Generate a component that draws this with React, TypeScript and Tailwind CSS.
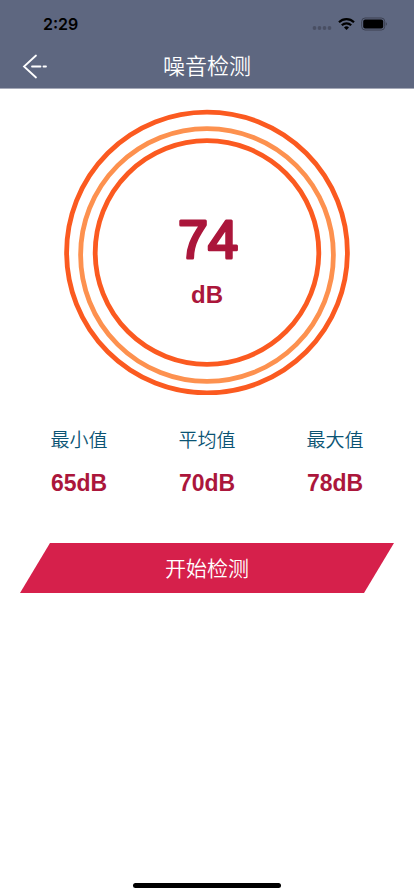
const CJK_FONT = "font-['Noto_Sans_CJK_SC',sans-serif] font-[350]";

const stats = [
  { label: "最小值", value: "65dB" },
  { label: "平均值", value: "70dB" },
  { label: "最大值", value: "78dB" },
];

function StatusBar() {
  return (
    <div className="flex h-11 items-center justify-between pt-1 pr-[27px] pl-[43px] text-black">
      <span className="font-['Inter',sans-serif] text-base font-semibold">
        2:29
      </span>
      <div className="flex items-center gap-1.5">
        <svg width="20" height="14" viewBox="0 0 20 14" fill="#494f63">
          <circle cx="2.5" cy="11" r="1.9" />
          <circle cx="7.5" cy="11" r="1.9" />
          <circle cx="12.5" cy="11" r="1.9" />
          <circle cx="17.5" cy="11" r="1.9" />
        </svg>
        <svg
          width="17"
          height="14"
          viewBox="0 0 17 14"
          fill="none"
          stroke="#000"
          strokeWidth="2.2"
        >
          <path d="M1 5.2a10.8 10.8 0 0 1 15 0" />
          <path d="M3.8 8.2a6.8 6.8 0 0 1 9.4 0" />
          <path
            d="M8.5 13 6 10.4a3.6 3.6 0 0 1 5 0z"
            fill="#000"
            stroke="none"
          />
        </svg>
        <svg width="26" height="14" viewBox="0 0 26 14">
          <rect
            x="0.7"
            y="1"
            width="23"
            height="12"
            rx="3.4"
            fill="none"
            stroke="#3c4151"
          />
          <rect x="2.2" y="2.5" width="20" height="9" rx="2" />
          <path d="M24.8 5.2c1.4.6 1.4 3 0 3.6z" fill="#3c4151" />
        </svg>
      </div>
    </div>
  );
}

function Header() {
  return (
    <header className="border-b border-[#a5a9b8] bg-[#5e6780]">
      <StatusBar />
      <div className="grid h-11 grid-cols-[1fr_auto_1fr] items-center px-[22px]">
        <button type="button" aria-label="返回" className="w-7">
          <svg
            width="26"
            height="26"
            viewBox="0 0 26 26"
            fill="none"
            stroke="#fff"
            strokeWidth="1.8"
            strokeLinecap="round"
          >
            <path d="M14 2.5 2 13.5l12 11" />
            <path d="M10 13.5h8.5M21.5 13.5h2.5" />
          </svg>
        </button>
        <h1 className={`${CJK_FONT} pb-1 text-[22px] text-white`}>噪音检测</h1>
      </div>
    </header>
  );
}

function Gauge({ value }: { value: number }) {
  return (
    <svg
      width="286"
      height="286"
      viewBox="0 0 286 286"
      className="mx-auto block"
      fill="none"
      strokeWidth="4.8"
    >
      <circle cx="143" cy="143.5" r="140.4" stroke="#fb5a20" />
      <circle cx="143" cy="146" r="126.4" stroke="#fd914f" />
      <circle cx="143" cy="143.5" r="111.8" stroke="#fb5a20" />
      <g
        fill="#ab163b"
        stroke="#ab163b"
        strokeLinejoin="round"
        textAnchor="middle"
        className="font-['Liberation_Sans',sans-serif]"
      >
        <text x="144" y="149" strokeWidth="3" className="text-[54px]">
          {value}
        </text>
        <text
          x="143"
          y="194"
          strokeWidth="0"
          className="text-[24px] font-bold"
        >
          dB
        </text>
      </g>
    </svg>
  );
}

export default function App() {
  return (
    <div className="flex min-h-screen flex-col bg-white">
      <Header />
      <main className="flex-1 px-5 pt-5">
        <Gauge value={74} />
        <dl className="-mx-[5px] mt-7 grid grid-cols-3 text-center">
          {stats.map(({ label, value }) => (
            <div key={label}>
              <dt className={`${CJK_FONT} text-[19px] leading-8 text-[#0b5474]`}>
                {label}
              </dt>
              <dd className="mt-3 font-['Liberation_Sans',sans-serif] text-[23px] leading-8 font-bold text-[#ab163b]">
                {value}
              </dd>
            </div>
          ))}
        </dl>
        <button
          type="button"
          className={`${CJK_FONT} mt-11 h-[50px] w-full bg-[#d6204b] text-[21px] text-white [clip-path:polygon(30px_0,100%_0,calc(100%-30px)_100%,0_100%)]`}
        >
          开始检测
        </button>
      </main>
      <footer className="flex justify-center pb-2">
        <div className="h-[5px] w-37 rounded-full bg-black" />
      </footer>
    </div>
  );
}
